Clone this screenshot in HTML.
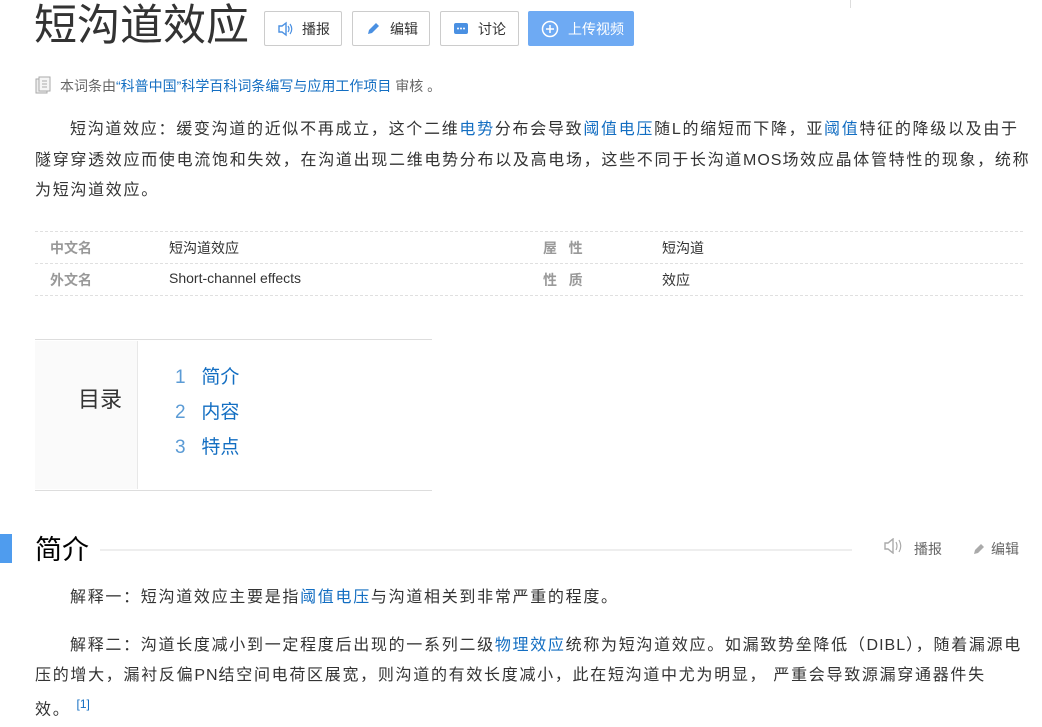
<!DOCTYPE html>
<html><head><meta charset="utf-8"><style>
*{margin:0;padding:0;box-sizing:border-box}
body{width:1042px;height:727px;overflow:hidden;background:#fff;font-family:"Liberation Sans","Noto Sans CJK SC",sans-serif;color:#333;position:relative}
.a{position:absolute;white-space:nowrap}
a{color:#136ec2;text-decoration:none}
.btn{position:absolute;top:11px;height:35px;border:1px solid #ccc;border-radius:2px;font-size:14px;color:#333;display:flex;align-items:center;padding-left:12px;background:#fff}
.btn svg{margin-right:9px}
p.t{position:absolute;left:35px;width:1000px;font-size:16px;line-height:30.5px;white-space:nowrap;letter-spacing:1.7px;text-indent:35px}
.m{letter-spacing:1px}
.k{color:#999;font-size:14px;font-weight:bold}
.v{font-size:14px;color:#333}
.dl{position:absolute;left:35px;width:988px;border-top:1px dashed #e0e0e0}
</style></head><body>
<div class="a" style="left:34px;top:1px;font-size:43px;line-height:50px;color:#333">短沟道效应</div>
<div class="btn" style="left:264px;width:78px"><svg width="16" height="16" viewBox="0 0 16 16"><path d="M2 5h3l4-3v12l-4-3H2z" fill="none" stroke="#4a90e2" stroke-width="1.4"/><path d="M11 5q2 3 0 6M13 3q3.5 5 0 10" fill="none" stroke="#4a90e2" stroke-width="1.2"/></svg>播报</div>
<div class="btn" style="left:352px;width:78px"><svg width="16" height="16" viewBox="0 0 16 16"><path d="M3 13l1-4 7-7 3 3-7 7z" fill="#4a90e2"/></svg>编辑</div>
<div class="btn" style="left:440px;width:79px"><svg width="16" height="16" viewBox="0 0 16 16"><rect x="1" y="2" width="14" height="11" rx="2" fill="#4a90e2"/><circle cx="5" cy="7.5" r="1" fill="#fff"/><circle cx="8" cy="7.5" r="1" fill="#fff"/><circle cx="11" cy="7.5" r="1" fill="#fff"/></svg>讨论</div>
<div class="btn" style="left:528px;width:106px;background:#6eaaf3;border-color:#6eaaf3;color:#fff"><svg width="18" height="18" viewBox="0 0 18 18"><circle cx="9" cy="9" r="7.5" fill="none" stroke="#fff" stroke-width="1.5"/><path d="M9 5v8M5 9h8" stroke="#fff" stroke-width="1.5"/></svg>上传视频</div>
<div class="a" style="left:850px;top:0;width:1px;height:8px;background:#ddd"></div>
<svg class="a" style="left:35px;top:76px" width="17" height="18" viewBox="0 0 17 18"><rect x="1" y="3" width="11" height="14" fill="#eee" stroke="#aaa"/><rect x="4" y="1" width="11" height="14" fill="#f5f5f5" stroke="#aaa"/><path d="M7 5h5M7 8h5M7 11h5" stroke="#aaa"/></svg>
<div class="a" style="left:60px;top:76px;font-size:14px;color:#666">本词条由<a>“科普中国”科学百科词条编写与应用工作项目</a> 审核 。</div>
<p class="t" style="top:115px">短沟道效应：缓变沟道的近似不再成立，这个二维<a>电势</a>分布会导致<a>阈值电压</a>随L的缩短而下降，亚<a>阈值</a>特征的降级以及由于<br>隧穿穿透效应而使电流饱和失效，在沟道出现二维电势分布以及高电场，这些不同于长沟道<span class="m">MOS</span>场效应晶体管特性的现象，统称<br>为短沟道效应。</p>
<div class="dl" style="top:231px"></div>
<div class="dl" style="top:263px"></div>
<div class="dl" style="top:295px"></div>
<div class="a k" style="left:50px;top:238px">中文名</div><div class="a v" style="left:169px;top:238px">短沟道效应</div>
<div class="a k" style="left:543px;top:238px">屋&nbsp;&nbsp;&nbsp;性</div><div class="a v" style="left:662px;top:238px">短沟道</div>
<div class="a k" style="left:50px;top:270px">外文名</div><div class="a v" style="left:169px;top:270px">Short-channel effects</div>
<div class="a k" style="left:543px;top:270px">性&nbsp;&nbsp;&nbsp;质</div><div class="a v" style="left:662px;top:270px">效应</div>
<div class="a" style="left:35px;top:339px;width:397px;height:152px;border-top:1px solid #ddd;border-bottom:1px solid #ddd"></div>
<div class="a" style="left:35px;top:341px;width:103px;height:148px;background:#fafafa;border-right:1px solid #e8e8e8"></div>
<div class="a" style="left:78px;top:382px;font-size:22px;color:#333">目录</div>
<div class="a" style="left:175px;top:360px;font-size:19px;line-height:35px;color:#136ec2"><span style="color:#5b9bd5">1</span>&nbsp;&nbsp;&nbsp;简介<br><span style="color:#5b9bd5">2</span>&nbsp;&nbsp;&nbsp;内容<br><span style="color:#5b9bd5">3</span>&nbsp;&nbsp;&nbsp;特点</div>
<div class="a" style="left:0;top:534px;width:12px;height:29px;background:#4f9cee"></div>
<div class="a" style="left:35px;top:531px;font-size:27px;line-height:38px;color:#000">简介</div>
<div class="a" style="left:100px;top:549px;width:752px;height:2px;background:#eee"></div>
<svg class="a" style="left:884px;top:538px" width="20" height="16" viewBox="0 0 20 16"><path d="M1 5h3l5-4v14l-5-4H1z" fill="none" stroke="#aaa" stroke-width="1.4"/><path d="M12 4q2 4 0 8M15 2q3.5 6 0 12" fill="none" stroke="#aaa" stroke-width="1.2"/></svg>
<div class="a" style="left:914px;top:539px;font-size:14px;color:#666">播报</div>
<svg class="a" style="left:973px;top:541px" width="14" height="14" viewBox="0 0 14 14"><path d="M1 13l1-4 6-6 3 3-6 6z" fill="#aaa"/></svg>
<div class="a" style="left:991px;top:539px;font-size:14px;color:#666">编辑</div>
<p class="t" style="top:583px">解释一：短沟道效应主要是指<a>阈值电压</a>与沟道相关到非常严重的程度。</p>
<p class="t" style="top:631px;line-height:29.5px">解释二：沟道长度减小到一定程度后出现的一系列二级<a>物理效应</a>统称为短沟道效应。如漏致势垒降低（<span class="m">DIBL</span>），随着漏源电<br>压的增大，漏衬反偏<span class="m">PN</span>结空间电荷区展宽，则沟道的有效长度减小，此在短沟道中尤为明显， 严重会导致源漏穿通器件失<br>效。 <sup style="font-size:12px;color:#136ec2;letter-spacing:0">[1]</sup></p>
</body></html>
